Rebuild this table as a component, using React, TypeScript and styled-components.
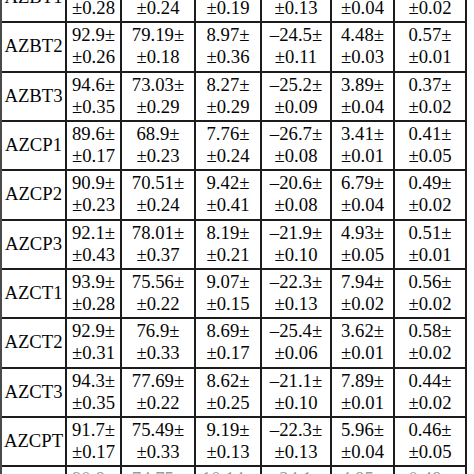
import * as React from 'react';
import styled, { createGlobalStyle } from 'styled-components';

const GlobalStyle = createGlobalStyle`
  html, body {
    margin: 0;
    padding: 0;
    background: #ffffff;
  }
  body {
    width: 474px;
    height: 474px;
    overflow: hidden;
  }
`;

const Page = styled.div`
  width: 474px;
  height: 474px;
  overflow: hidden;
  background: #fff;
`;

const Grid = styled.div`
  display: grid;
  grid-template-columns: 65px 55px 74px 66px 70px 63px 72px;
  grid-auto-rows: 49.33px;
  width: max-content;
  margin-top: -26px;
  border-left: 2px solid #4a4a4a;
  font-family: 'Liberation Serif', 'Times New Roman', serif;
  font-size: 18.7px;
  line-height: 22px;
  color: #050505;
`;

const Cell = styled.div<{ $faded?: boolean }>`
  box-sizing: border-box;
  border-right: 2px solid #1c1c1c;
  border-bottom: 2px solid #1c1c1c;
  display: flex;
  flex-direction: column;
  align-items: center;
  justify-content: center;
  padding-bottom: 1px;
  white-space: nowrap;
  overflow: hidden;
  color: ${p => (p.$faded ? '#9a9a9a' : 'inherit')};
`;

interface Row {
  name: string;
  values: [string, string][];
}

const rows: Row[] = [
  {
    name: 'AZBT1',
    values: [
      ['93.2±', '±0.28'],
      ['77.41±', '±0.24'],
      ['8.64±', '±0.19'],
      ['–23.8±', '±0.13'],
      ['4.12±', '±0.04'],
      ['0.49±', '±0.02'],
    ],
  },
  {
    name: 'AZBT2',
    values: [
      ['92.9±', '±0.26'],
      ['79.19±', '±0.18'],
      ['8.97±', '±0.36'],
      ['–24.5±', '±0.11'],
      ['4.48±', '±0.03'],
      ['0.57±', '±0.01'],
    ],
  },
  {
    name: 'AZBT3',
    values: [
      ['94.6±', '±0.35'],
      ['73.03±', '±0.29'],
      ['8.27±', '±0.29'],
      ['–25.2±', '±0.09'],
      ['3.89±', '±0.04'],
      ['0.37±', '±0.02'],
    ],
  },
  {
    name: 'AZCP1',
    values: [
      ['89.6±', '±0.17'],
      ['68.9±', '±0.23'],
      ['7.76±', '±0.24'],
      ['–26.7±', '±0.08'],
      ['3.41±', '±0.01'],
      ['0.41±', '±0.05'],
    ],
  },
  {
    name: 'AZCP2',
    values: [
      ['90.9±', '±0.23'],
      ['70.51±', '±0.24'],
      ['9.42±', '±0.41'],
      ['–20.6±', '±0.08'],
      ['6.79±', '±0.04'],
      ['0.49±', '±0.02'],
    ],
  },
  {
    name: 'AZCP3',
    values: [
      ['92.1±', '±0.43'],
      ['78.01±', '±0.37'],
      ['8.19±', '±0.21'],
      ['–21.9±', '±0.10'],
      ['4.93±', '±0.05'],
      ['0.51±', '±0.01'],
    ],
  },
  {
    name: 'AZCT1',
    values: [
      ['93.9±', '±0.28'],
      ['75.56±', '±0.22'],
      ['9.07±', '±0.15'],
      ['–22.3±', '±0.13'],
      ['7.94±', '±0.02'],
      ['0.56±', '±0.02'],
    ],
  },
  {
    name: 'AZCT2',
    values: [
      ['92.9±', '±0.31'],
      ['76.9±', '±0.33'],
      ['8.69±', '±0.17'],
      ['–25.4±', '±0.06'],
      ['3.62±', '±0.01'],
      ['0.58±', '±0.02'],
    ],
  },
  {
    name: 'AZCT3',
    values: [
      ['94.3±', '±0.35'],
      ['77.69±', '±0.22'],
      ['8.62±', '±0.25'],
      ['–21.1±', '±0.10'],
      ['7.89±', '±0.01'],
      ['0.44±', '±0.02'],
    ],
  },
  {
    name: 'AZCPT',
    values: [
      ['91.7±', '±0.17'],
      ['75.49±', '±0.33'],
      ['9.19±', '±0.13'],
      ['–22.3±', '±0.13'],
      ['5.96±', '±0.04'],
      ['0.46±', '±0.05'],
    ],
  },
];

const lastRow: Row = {
  name: '',
  values: [
    ['90.8±', '±0.21'],
    ['74.75±', '±0.26'],
    ['10.14±', '±0.18'],
    ['–24.1±', '±0.12'],
    ['4.85±', '±0.03'],
    ['0.48±', '±0.02'],
  ],
};

const renderRow = (row: Row, key: string, faded = false) => (
  <React.Fragment key={key}>
    <Cell $faded={faded}>{row.name}</Cell>
    {row.values.map(([a, b], i) => (
      <Cell key={i} $faded={faded}>
        <span>{a}</span>
        <span>{b}</span>
      </Cell>
    ))}
  </React.Fragment>
);

export default function App() {
  return (
    <Page>
      <GlobalStyle />
      <Grid>
        {rows.map(r => renderRow(r, r.name))}
        {renderRow(lastRow, 'last', true)}
      </Grid>
    </Page>
  );
}
